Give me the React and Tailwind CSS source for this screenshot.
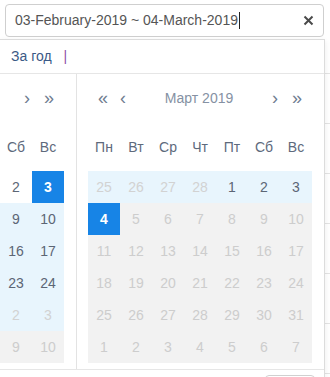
import React from "react";

const START = new Date(2019, 1, 3).getTime();
const END = new Date(2019, 2, 4).getTime();
const WEEK = ["Пн", "Вт", "Ср", "Чт", "Пт", "Сб", "Вс"];
const MONTHS = ["Январь", "Февраль", "Март"];

function buildMonth(year, month) {
  const first = new Date(year, month, 1);
  const offset = (first.getDay() + 6) % 7;
  const cells = [];
  for (let i = 0; i < 42; i++) {
    const d = new Date(year, month, 1 - offset + i);
    const t = d.getTime();
    cells.push({
      key: t,
      day: d.getDate(),
      inMonth: d.getMonth() === month,
      sel: t === START || t === END,
      inRange: t > START && t < END,
      disabled: t > END,
    });
  }
  return cells;
}

function cellClass(c) {
  if (c.sel) return "bg-[#1784e6] text-white font-bold";
  if (c.disabled) return "bg-[#f2f2f2] text-[#cdcdcd]";
  const txt = c.inMonth ? "text-[#5c6675]" : "text-[#d2d2d2]";
  if (c.inRange) return "bg-[#e8f5fd] " + txt;
  return "bg-white " + txt;
}

function Calendar({ year, month }) {
  const cells = buildMonth(year, month);
  return (
    <div className="w-[224px] shrink-0">
      <div className="flex h-[49px] items-center text-[18px] text-[#6f7d90]">
        <span className="w-[30px] text-center">«</span>
        <span className="w-[10px] text-center">‹</span>
        <span className="flex-1 text-center text-[14px] text-[#8591a3]">
          {MONTHS[month]} {year}
        </span>
        <span className="w-[10px] text-center">›</span>
        <span className="w-[2px]" />
        <span className="w-[30px] text-center">»</span>
      </div>
      <div className="grid h-[48px] grid-cols-7 items-center text-[14px] text-[#5e6a7c]">
        {WEEK.map((w) => (
          <span key={w} className="text-center">
            {w}
          </span>
        ))}
      </div>
      <div className="grid grid-cols-7 text-[14px]">
        {cells.map((c) => (
          <div
            key={c.key}
            className={"flex h-[32px] items-center justify-center " + cellClass(c)}
          >
            {c.day}
          </div>
        ))}
      </div>
    </div>
  );
}

export default function App() {
  return (
    <div className="relative h-[377px] w-[330px] overflow-hidden bg-white font-['Liberation_Sans',Arial,sans-serif]">
      {/* page behind the popover */}
      <div className="flex flex-col pt-[24px]">
        {[0, 1, 2, 3, 4, 5, 6].map((i) => (
          <div key={i} className="h-[50px] border-b border-[#e3e3e3]" />
        ))}
      </div>

      {/* input */}
      <div className="absolute left-[5px] top-[4px] flex h-[33px] w-[319px] items-center rounded-[4px] border border-[#cfcfcf] bg-white pl-[9px] pr-[9px]">
        <span className="text-[14px] text-[#555]">
          03-February-2019 ~ 04-March-2019
        </span>
        <span className="ml-[1px] h-[17px] w-[1px] bg-[#222]" />
        <svg className="ml-auto" width="11" height="11" viewBox="0 0 11 11">
          <path d="M1.5 1.5 L9.5 9.5 M9.5 1.5 L1.5 9.5" stroke="#4a4a4a" strokeWidth="2" />
        </svg>
      </div>

      {/* dropdown */}
      <div className="absolute left-0 top-[39px] w-[325px] border-r border-t border-[#dcdcdc] bg-white shadow-[0_2px_6px_rgba(0,0,0,0.08)]">
        <div className="flex h-[34px] items-center border-b border-[#e6e6e6] pl-[11px] text-[14px]">
          <span className="text-[#3b5a86]">За год</span>
          <span className="ml-[12px] text-[#8e4fa8]">|</span>
        </div>
        <div className="flex">
          <div className="flex w-[77px] justify-end overflow-hidden border-r border-[#e3e3e3] pb-[6px] pr-[12px]">
            <Calendar year={2019} month={1} />
          </div>
          <div className="pb-[6px] pl-[11px] pr-[12px]">
            <Calendar year={2019} month={2} />
          </div>
        </div>
        <div className="flex h-[30px] justify-end border-t border-[#e6e6e6] pr-[9px] pt-[5px]">
          <div className="h-[30px] w-[50px] rounded-[4px] border border-[#d0d0d0]" />
        </div>
      </div>
    </div>
  );
}
